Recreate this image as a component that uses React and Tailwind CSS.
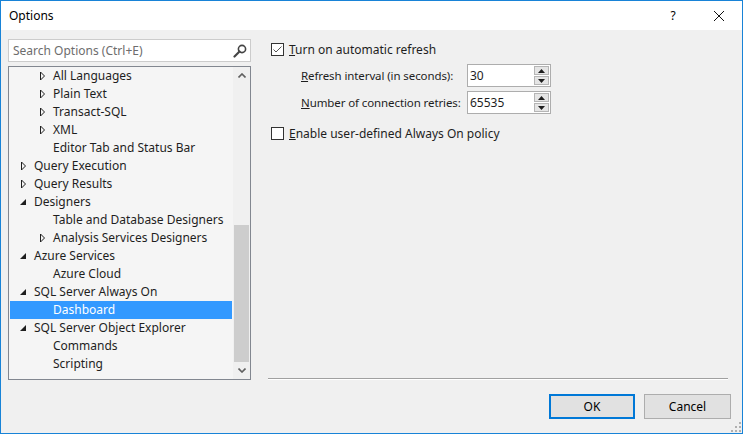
import React from "react";

const F = { fontFamily: '"Segoe UI", "Noto Sans", sans-serif' };

function Collapsed() {
  return (
    <svg width="7" height="10" viewBox="0 0 7 10" className="block">
      <path d="M1.5 1 L5.5 5 L1.5 9 Z" fill="none" stroke="#1e1e1e" strokeWidth="1" />
    </svg>
  );
}
function Expanded() {
  return (
    <svg width="7" height="10" viewBox="0 0 7 10" className="block">
      <path d="M6 2 L6 8 L0 8 Z" fill="#1e1e1e" />
    </svg>
  );
}

const rows = [
  { t: "All Languages", l: 2, a: "c" },
  { t: "Plain Text", l: 2, a: "c" },
  { t: "Transact-SQL", l: 2, a: "c" },
  { t: "XML", l: 2, a: "c" },
  { t: "Editor Tab and Status Bar", l: 2 },
  { t: "Query Execution", l: 1, a: "c" },
  { t: "Query Results", l: 1, a: "c" },
  { t: "Designers", l: 1, a: "e" },
  { t: "Table and Database Designers", l: 2 },
  { t: "Analysis Services Designers", l: 2, a: "c" },
  { t: "Azure Services", l: 1, a: "e" },
  { t: "Azure Cloud", l: 2 },
  { t: "SQL Server Always On", l: 1, a: "e" },
  { t: "Dashboard", l: 2, sel: true },
  { t: "SQL Server Object Explorer", l: 1, a: "e" },
  { t: "Commands", l: 2 },
  { t: "Scripting", l: 2 },
];

function Row({ r }) {
  return (
    <div
      className={
        "flex items-center h-[18px] " +
        (r.l === 1 ? "pl-[10px] " : "pl-[29px] ") +
        (r.sel ? "bg-[#3399ff] text-white" : "text-[#1e1e1e]")
      }
    >
      <div className="w-[14px] flex items-center">
        {r.a === "c" ? <Collapsed /> : r.a === "e" ? <Expanded /> : null}
      </div>
      <span className="whitespace-nowrap leading-none">{r.t}</span>
    </div>
  );
}

function Checkbox({ checked }) {
  return (
    <div className="w-[13px] h-[13px] border border-[#333333] bg-white flex items-center justify-center shrink-0">
      {checked && (
        <svg width="11" height="11" viewBox="0 0 11 11">
          <path d="M1.5 5.5 L4 8 L9.5 2.5" fill="none" stroke="#555555" strokeWidth="1" />
        </svg>
      )}
    </div>
  );
}

function Spin({ value }) {
  return (
    <div className="w-[84px] h-[23px] border border-[#adadad] bg-white flex">
      <div className="flex-1 pl-[2px] flex items-center text-[#1e1e1e] leading-none">{value}</div>
      <div className="w-[16px] flex flex-col gap-[1px] py-[1px] pr-[1px]">
        <div className="flex-1 bg-[#e5e5e5] border border-[#b5b5b5] flex items-center justify-center">
          <svg width="7" height="4" viewBox="0 0 7 4"><path d="M0 4 L3.5 0 L7 4 Z" fill="#1e1e1e" /></svg>
        </div>
        <div className="flex-1 bg-[#e5e5e5] border border-[#b5b5b5] flex items-center justify-center">
          <svg width="7" height="4" viewBox="0 0 7 4"><path d="M0 0 L3.5 4 L7 0 Z" fill="#1e1e1e" /></svg>
        </div>
      </div>
    </div>
  );
}

export default function App() {
  return (
    <div
      style={F}
      className="w-[743px] h-[434px] border border-[#1883d7] bg-[#f0f0f0] flex flex-col text-[12px] text-[#1e1e1e] overflow-hidden"
    >
      {/* title bar */}
      <div className="h-[29px] bg-white flex items-center shrink-0">
        <span className="pl-[8px] flex-1 text-black">Options</span>
        <div className="w-[46px] h-full flex items-center justify-center text-black">?</div>
        <div className="w-[46px] h-full flex items-center justify-center">
          <svg width="10" height="10" viewBox="0 0 10 10">
            <path d="M0 0 L10 10 M10 0 L0 10" stroke="#111" strokeWidth="1" />
          </svg>
        </div>
      </div>

      {/* main */}
      <div className="flex h-[350px] shrink-0">
        <div className="pl-[7px] pt-[9px] w-[250px] flex flex-col gap-[4px]">
          <div className="h-[23px] w-[243px] bg-white border border-[#cccccc] flex items-center pl-[4px] pr-[3px]">
            <span className="flex-1 text-[#6d6d6d] leading-none">Search Options (Ctrl+E)</span>
            <svg width="14" height="14" viewBox="0 0 14 14">
              <circle cx="9" cy="5" r="3.6" fill="none" stroke="#444" strokeWidth="1.6" />
              <path d="M6.5 7.5 L1.5 12.5" stroke="#444" strokeWidth="2.2" strokeLinecap="round" />
            </svg>
          </div>
          <div className="h-[314px] w-[243px] border border-[#828790] bg-[#f5f5f5] flex">
            <div className="flex-1 px-[1px]">
              {rows.map((r) => (
                <Row key={r.t} r={r} />
              ))}
            </div>
            <div className="w-[17px] bg-[#f0f0f0] flex flex-col">
              <div className="h-[17px] flex items-center justify-center">
                <svg width="8" height="5" viewBox="0 0 8 5"><path d="M0.5 4.5 L4 1 L7.5 4.5" fill="none" stroke="#606060" strokeWidth="1.6" /></svg>
              </div>
              <div className="flex-1 flex flex-col px-[1px]">
                <div className="h-[141px]" />
                <div className="flex-1 bg-[#cdcdcd]" />
              </div>
              <div className="h-[17px] flex items-center justify-center">
                <svg width="8" height="5" viewBox="0 0 8 5"><path d="M0.5 0.5 L4 4 L7.5 0.5" fill="none" stroke="#606060" strokeWidth="1.6" /></svg>
              </div>
            </div>
          </div>
        </div>

        <div className="flex-1 flex flex-col pl-[17px] pr-[14px]">
          <div className="flex-1 pt-[13px] pl-[3px]">
            <div className="flex items-center gap-[5px] h-[13px]">
              <Checkbox checked />
              <span className="leading-none whitespace-nowrap"><u>T</u>urn on automatic refresh</span>
            </div>
            <div className="grid grid-cols-[166px_84px] gap-y-[4px] pl-[30px] mt-[8px]">
              <div className="flex items-center h-[23px] whitespace-nowrap text-[11.5px] tracking-[-0.1px]"><span className="leading-none"><u>R</u>efresh interval (in seconds):</span></div>
              <Spin value="30" />
              <div className="flex items-center h-[23px] whitespace-nowrap text-[11.5px] tracking-[-0.1px]"><span className="leading-none"><u>N</u>umber of connection retries:</span></div>
              <Spin value="65535" />
            </div>
            <div className="flex items-center gap-[5px] h-[13px] mt-[13px]">
              <Checkbox />
              <span className="leading-none whitespace-nowrap"><u>E</u>nable user-defined Always On policy</span>
            </div>
          </div>
          <div className="h-[1px] bg-[#a0a0a0]" />
          <div className="h-[1px] bg-white" />
        </div>
      </div>

      {/* footer */}
      <div className="flex-1 flex justify-end items-start pt-[14px] pr-[11px] gap-[9px] relative">
        <button className="w-[86px] h-[25px] bg-[#e1e1e1] border-2 border-[#0078d7] text-black leading-none" style={F}>OK</button>
        <button className="w-[87px] h-[25px] bg-[#e1e1e1] border border-[#adadad] text-black leading-none" style={F}>Cancel</button>
        <div className="absolute right-[1px] bottom-[1px]">
          <svg width="10" height="10" viewBox="0 0 10 10" fill="#b0b0b0">
            <rect x="8" y="0" width="2" height="2" />
            <rect x="4" y="4" width="2" height="2" />
            <rect x="8" y="4" width="2" height="2" />
            <rect x="0" y="8" width="2" height="2" />
            <rect x="4" y="8" width="2" height="2" />
            <rect x="8" y="8" width="2" height="2" />
          </svg>
        </div>
      </div>
    </div>
  );
}
